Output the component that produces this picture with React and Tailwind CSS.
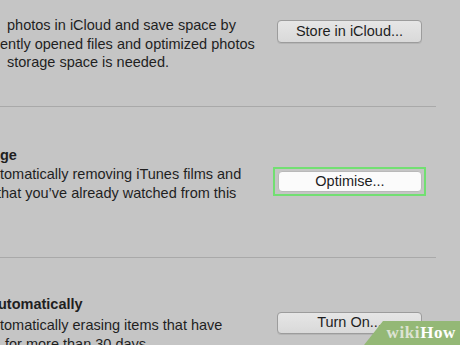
export default function App() {
  const btn =
    "w-[145px] rounded-[4px] border border-[#9c9c9c] bg-gradient-to-b from-[#e6e6e6] to-[#d9d9d9] text-[14.5px] text-[#1e1e1e] flex items-center justify-center shadow-[0_1px_0_rgba(0,0,0,0.08)]";

  return (
    <div className="relative w-[460px] h-[345px] overflow-hidden bg-[#c5c5c5] text-[#1f1f1f] text-[14.5px] font-['Liberation_Sans',Arial,sans-serif]">
      {/* iCloud section */}
      <div className="flex w-[436px] h-[107px] border-b border-[#a9a9a9]">
        <div className="w-[277px] pt-[16px] leading-[18.5px] whitespace-nowrap">
          <div className="ml-[7px]">photos in iCloud and save space by</div>
          <div>ently opened files and optimized photos</div>
          <div className="ml-[7px]">storage space is needed.</div>
        </div>
        <div className="pt-[20px]">
          <div className={`${btn} h-[23px]`}>Store in iCloud...</div>
        </div>
      </div>

      {/* Optimise storage section */}
      <div className="flex w-[436px] h-[151px] border-b border-[#a9a9a9]">
        <div className="w-[277px] pt-[38px] whitespace-nowrap">
          <div className="font-bold leading-[20px]">ge</div>
          <div className="leading-[18.5px]">
            <div>tomatically removing iTunes films and</div>
            <div className="-ml-[3px]">that you’ve already watched from this</div>
          </div>
        </div>
        <div className="pt-[60px]">
          <div className="-ml-[4px] w-[153px] h-[29px] border-2 border-[#72df72] pl-[3px] pr-[2px] py-[2px]">
            <div className="w-full h-full rounded-[4px] border border-[#b9b9b9] bg-[#fbfbfb] text-[14.5px] text-[#1e1e1e] flex items-center justify-center">
              Optimise...
            </div>
          </div>
        </div>
      </div>

      {/* Empty bin section */}
      <div className="flex w-[436px]">
        <div className="w-[277px] pt-[35px] whitespace-nowrap">
          <div className="font-bold leading-[22px] -ml-[2px]">utomatically</div>
          <div className="leading-[18.5px] mt-[1px]">
            <div>tomatically erasing items that have</div>
            <div className="ml-[5px]">for more than 30 days</div>
          </div>
        </div>
        <div className="pt-[54px]">
          <div className={`${btn} h-[22px]`}>Turn On...</div>
        </div>
      </div>

      {/* wikiHow badge */}
      <div className="absolute right-0 bottom-0 w-[96px] h-[24px]">
        <svg className="absolute inset-0" width="96" height="24" viewBox="0 0 96 24">
          <polygon points="19,0 96,0 96,24 0,24" fill="#94b876" />
        </svg>
        <div className="absolute right-[4px] top-[3px] text-[17px] leading-[18px] font-bold tracking-[0.6px] font-['Liberation_Serif',Georgia,serif]">
          <span className="text-[#dde3d3]">wiki</span>
          <span className="text-[#ffffff]">How</span>
        </div>
      </div>
    </div>
  );
}
